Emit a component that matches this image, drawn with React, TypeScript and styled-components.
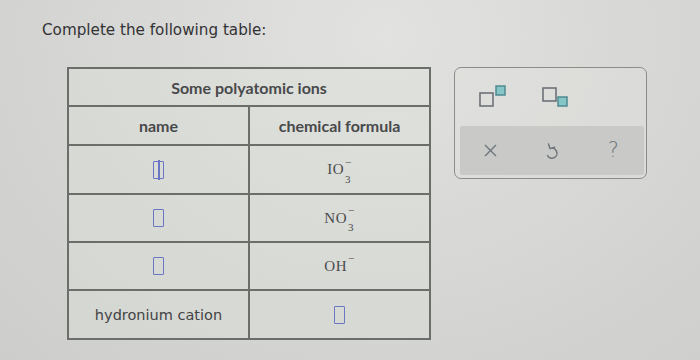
import React from "react";
import styled, { createGlobalStyle } from "styled-components";

const GlobalStyle = createGlobalStyle`
  html, body { margin: 0; padding: 0; }
  body {
    width: 700px;
    height: 360px;
    overflow: hidden;
    background: radial-gradient(ellipse at 55% 10%, #e2e2e0 0%, #d8d8d6 45%, #cdcecb 100%);
    font-family: "DejaVu Sans", Verdana, sans-serif;
  }
`;

const Page = styled.div`
  width: 700px;
  height: 360px;
  box-sizing: border-box;
  padding: 20px 0 0 42px;
`;

const Title = styled.h1`
  margin: 0;
  font-family: "DejaVu Sans", Verdana, sans-serif;
  font-weight: 400;
  font-size: 15.2px;
  line-height: 20px;
  color: #333335;
`;

const Content = styled.div`
  display: flex;
  align-items: flex-start;
  gap: 23px;
  margin: 27px 0 0 25px;
`;

const Table = styled.table`
  width: 364px;
  border-collapse: collapse;
  border: 2px solid #6c6e6c;
  background: rgba(220, 226, 218, 0.35);
  table-layout: fixed;
`;

const Cell = styled.td<{ $h: number; $head?: boolean }>`
  height: ${(p) => p.$h}px;
  padding: 0;
  border: 2px solid #6c6e6c;
  text-align: center;
  vertical-align: middle;
  font-family: ${(p) => (p.$head ? '"Lato", "Open Sans", sans-serif' : '"DejaVu Sans", Verdana, sans-serif')};
  font-weight: ${(p) => (p.$head ? 700 : 400)};
  font-size: ${(p) => (p.$head ? "16px" : "14.5px")};
  color: ${(p) => (p.$head ? "#48494b" : "#434345")};
`;

const InputBox = styled.span<{ $cursor?: boolean }>`
  display: inline-block;
  position: relative;
  width: 9px;
  height: 16px;
  border: 1.5px solid #6a76c4;
  border-radius: 1px;
  vertical-align: middle;
  &::after {
    content: "";
    display: ${(p) => (p.$cursor ? "block" : "none")};
    position: absolute;
    left: 3.5px;
    top: -2px;
    width: 2px;
    height: 20px;
    background: #6a76c4;
  }
`;

const Formula = styled.span`
  font-family: "Liberation Serif", "Times New Roman", serif;
  font-size: 15px;
  color: #4a4a4c;
  display: inline-flex;
  align-items: center;
  letter-spacing: 0.5px;
`;

const Scripts = styled.span`
  display: inline-flex;
  flex-direction: column;
  align-items: flex-start;
  font-size: 11px;
  line-height: 9px;
  margin-left: 1px;
`;

const Sup = styled.span`
  height: 9px;
  transform: translateY(-3px);
`;

const Sub = styled.span`
  height: 9px;
  transform: translateY(5px);
`;

const Panel = styled.div`
  width: 193px;
  height: 112px;
  box-sizing: border-box;
  border: 1.5px solid #8c8d8b;
  border-radius: 7px;
  padding: 0 2px 3px 5px;
  display: flex;
  flex-direction: column;
  background: rgba(225, 226, 223, 0.4);
`;

const IconRow = styled.div`
  height: 58px;
  display: flex;
  align-items: center;
  gap: 33px;
  padding-left: 19px;
`;

const ActionRow = styled.div`
  flex: 1;
  display: grid;
  grid-template-columns: repeat(3, 1fr);
  align-items: center;
  justify-items: center;
  background: #c9cac7;
  border-radius: 2px;
`;

const IconButton = styled.span`
  display: inline-flex;
  align-items: center;
  justify-content: center;
  color: #6d747b;
`;

const Question = styled.span`
  font-family: "DejaVu Sans", sans-serif;
  font-size: 21px;
  color: #6d747b;
  font-weight: 300;
  line-height: 1;
`;

const Superscript = () => (
  <svg width="30" height="24" viewBox="0 0 30 24">
    <rect x="1" y="8" width="13" height="13" fill="none" stroke="#6d7278" strokeWidth="1.6" />
    <rect x="17" y="1" width="9" height="9" fill="#86c6c9" stroke="#4d8a90" strokeWidth="1.5" />
  </svg>
);

const Subscript = () => (
  <svg width="28" height="24" viewBox="0 0 28 24">
    <rect x="1" y="3" width="13" height="13" fill="none" stroke="#6d7278" strokeWidth="1.6" />
    <rect x="16" y="12" width="9" height="9" fill="#86c6c9" stroke="#4d8a90" strokeWidth="1.5" />
  </svg>
);

const Cross = () => (
  <svg width="13" height="13" viewBox="0 0 13 13">
    <path d="M1 1 L12 12 M12 1 L1 12" stroke="#6d747b" strokeWidth="1.4" fill="none" />
  </svg>
);

const Undo = () => (
  <svg width="14" height="18" viewBox="0 0 14 18">
    <path
      d="M3.5 2 L5 6.6 L9.6 5.2 M5 6.6 A5 5 0 1 1 2.6 13.6"
      stroke="#6d747b"
      strokeWidth="1.5"
      fill="none"
      strokeLinecap="round"
      strokeLinejoin="round"
    />
  </svg>
);

const Ion = ({ base, sub }: { base: string; sub?: string }) => (
  <Formula>
    {base}
    <Scripts>
      <Sup>−</Sup>
      <Sub>{sub ?? "\u00a0"}</Sub>
    </Scripts>
  </Formula>
);

export default function App() {
  return (
    <>
      <GlobalStyle />
      <Page>
        <Title>Complete the following table:</Title>
        <Content>
          <Table>
            <tbody>
              <tr>
                <Cell $h={36} $head colSpan={2}>Some polyatomic ions</Cell>
              </tr>
              <tr>
                <Cell $h={37} $head>name</Cell>
                <Cell $h={37} $head>chemical formula</Cell>
              </tr>
              <tr>
                <Cell $h={47}><InputBox $cursor /></Cell>
                <Cell $h={47}><Ion base="IO" sub="3" /></Cell>
              </tr>
              <tr>
                <Cell $h={46}><InputBox /></Cell>
                <Cell $h={46}><Ion base="NO" sub="3" /></Cell>
              </tr>
              <tr>
                <Cell $h={46}><InputBox /></Cell>
                <Cell $h={46}><Ion base="OH" /></Cell>
              </tr>
              <tr>
                <Cell $h={47}>hydronium cation</Cell>
                <Cell $h={47}><InputBox /></Cell>
              </tr>
            </tbody>
          </Table>
          <Panel>
            <IconRow>
              <Superscript />
              <Subscript />
            </IconRow>
            <ActionRow>
              <IconButton><Cross /></IconButton>
              <IconButton><Undo /></IconButton>
              <Question>?</Question>
            </ActionRow>
          </Panel>
        </Content>
      </Page>
    </>
  );
}
